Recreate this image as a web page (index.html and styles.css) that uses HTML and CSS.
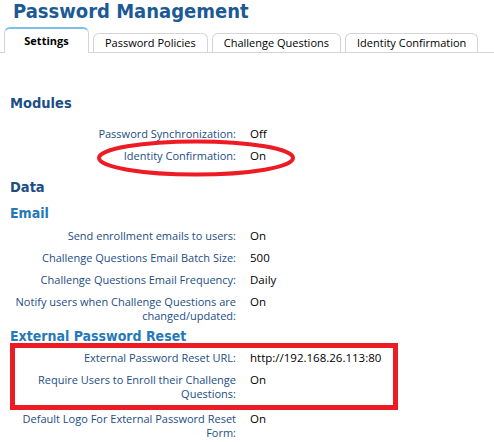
FILE: index.html
```html
<!DOCTYPE html>
<html lang="en">

<head>
    <meta charset="UTF-8">
    <title>Password Management</title>
    <link rel="stylesheet" href="styles.css">
</head>

<body>
    <h1 class="page-title">Password Management</h1>

    <ul class="tabs">
        <li class="tab active">Settings</li>
        <li class="tab">Password Policies</li>
        <li class="tab">Challenge Questions</li>
        <li class="tab">Identity Confirmation</li>
    </ul>

    <div class="content">
        <h2 class="section">Modules</h2>
        <div class="group">
            <div class="row">
                <div class="label">Password Synchronization:</div>
                <div class="value">Off</div>
            </div>
            <div class="row">
                <div class="label">Identity Confirmation:</div>
                <div class="value">On</div>
            </div>
            <svg class="mark-ellipse" width="204" height="40" viewBox="0 0 204 40">
                <ellipse cx="102" cy="20" rx="97" ry="16.5" fill="none" stroke="#ed1c24" stroke-width="4"/>
            </svg>
        </div>

        <h2 class="section">Data</h2>
        <h3 class="subsection email-title">Email</h3>
        <div class="row">
            <div class="label">Send enrollment emails to users:</div>
            <div class="value">On</div>
        </div>
        <div class="row">
            <div class="label">Challenge Questions Email Batch Size:</div>
            <div class="value">500</div>
        </div>
        <div class="row">
            <div class="label">Challenge Questions Email Frequency:</div>
            <div class="value">Daily</div>
        </div>
        <div class="row">
            <div class="label">Notify users when Challenge Questions are changed/updated:</div>
            <div class="value">On</div>
        </div>

        <h3 class="subsection reset-title">External Password Reset</h3>
        <div class="highlight-box">
            <div class="row">
                <div class="label">External Password Reset URL:</div>
                <div class="value">http://192.168.26.113:80</div>
            </div>
            <div class="row">
                <div class="label">Require Users to Enroll their Challenge Questions:</div>
                <div class="value">On</div>
            </div>
        </div>
        <div class="row">
            <div class="label">Default Logo For External Password Reset Form:</div>
            <div class="value">On</div>
        </div>
    </div>
</body>

</html>
```

FILE: styles.css
```css
body {
    font-family: "Open Sans", "Noto Sans", sans-serif;
    margin: 0;
    padding: 0;
    background-color: white;
    color: black;
}

.page-title {
    margin: 0;
    padding: 0 0 0 13px;
    height: 28px;
    font-family: "DejaVu Sans Condensed", "DejaVu Sans", sans-serif;
    font-stretch: condensed;
    font-size: 20px;
    line-height: 22px;
    font-weight: bold;
    color: #1c5a96;
}

.tabs {
    display: flex;
    align-items: flex-end;
    gap: 4px;
    list-style: none;
    margin: 0;
    padding: 0 0 0 4px;
    height: 24px;
    border-bottom: 1px solid #d4d4d4;
}

.tab {
    height: 18px;
    padding: 0 11px;
    border: 1px solid #d4d4d4;
    border-bottom: none;
    border-radius: 6px 6px 0 0;
    font-size: 11px;
    line-height: 18px;
    background-color: white;
}

.tab.active {
    width: 63px;
    height: 24px;
    padding: 0 10px;
    text-align: center;
    font-weight: bold;
    line-height: 24px;
    border-top: 2px solid #7cc0ea;
    margin-bottom: -1px;
}

.content {
    padding: 40px 0 0 10px;
}

.section {
    margin: 0;
    font-family: "DejaVu Sans Condensed", "DejaVu Sans", sans-serif;
    font-stretch: condensed;
    font-size: 14.5px;
    line-height: 20px;
    font-weight: bold;
    color: #1b4e85;
}

.subsection {
    margin: 0 0 2px;
    font-family: "DejaVu Sans Condensed", "DejaVu Sans", sans-serif;
    font-stretch: condensed;
    font-size: 14px;
    line-height: 20px;
    font-weight: bold;
    color: #2679b8;
}

.email-title {
    margin-top: 6px;
}

.reset-title {
    margin-top: -1px;
}

.group {
    position: relative;
    padding: 10px 0 10px;
}

.mark-ellipse {
    position: absolute;
    left: 84px;
    top: 25px;
}

.row {
    display: grid;
    grid-template-columns: 226px auto;
    gap: 14px;
    padding: 4px 0;
    font-size: 11px;
    line-height: 14px;
}

.label {
    text-align: right;
    color: #1b4e85;
}

.value {
    color: black;
    font-size: 11.5px;
}

.highlight-box {
    border: 5px solid #ed1c24;
    width: 378px;
    margin: -5px 0 -2px 0;
    padding: 0;
}

.highlight-box .row:first-child {
    padding-top: 3px;
}

.highlight-box .row {
    margin-left: -5px;
}
```
